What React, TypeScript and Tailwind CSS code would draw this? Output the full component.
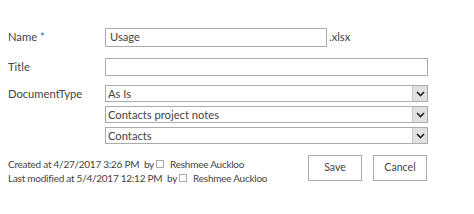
import React from "react";

const font = "font-['Lato','Open_Sans',sans-serif]";

const Chevron: React.FC = () => (
  <span className="flex items-center justify-center w-[15px] h-[15px] bg-[#e1e1e1] border-l border-[#c6c6c6]">
    <svg width="9" height="6" viewBox="0 0 9 6">
      <path d="M1 1 L4.5 4.5 L8 1" fill="none" stroke="#222" strokeWidth="1.6" />
    </svg>
  </span>
);

const Select: React.FC<{ value: string }> = ({ value }) => (
  <div className="flex items-center justify-between w-[323px] h-[17px] border border-[#ababab] bg-white">
    <span className="pl-[2px] leading-none">{value}</span>
    <Chevron />
  </div>
);

const Box: React.FC = () => (
  <span className="inline-block shrink-0 w-[8px] h-[8px] border border-[#aaa] ml-[2px] mr-[6px]" />
);

const App: React.FC = () => {
  return (
    <div className={`w-[474px] h-[214px] bg-white pl-2 pt-[28px] text-[11.2px] text-[#444] ${font}`}>
      {/* Name */}
      <div className="flex items-center h-[19px]">
        <span className="w-[97px] shrink-0">
          Name <span className="text-[#0072c6]">*</span>
        </span>
        <div className="flex items-center w-[222px] h-[19px] border border-[#ababab] pl-[4px]">Usage</div>
        <span className="ml-[2px]">.xlsx</span>
      </div>

      {/* Title */}
      <div className="flex items-center h-[18px] mt-[11px]">
        <span className="w-[97px] shrink-0">Title</span>
        <div className="w-[323px] h-[18px] border border-[#ababab]" />
      </div>

      {/* DocumentType */}
      <div className="flex mt-[9px]">
        <span className="w-[97px] shrink-0 leading-[17px]">DocumentType</span>
        <div className="flex flex-col gap-[4px]">
          <Select value="As Is" />
          <Select value="Contacts project notes" />
          <Select value="Contacts" />
        </div>
      </div>

      {/* Footer */}
      <div className="flex items-start mt-[11px]">
        <div className="w-[300px] shrink-0 whitespace-nowrap text-[10px] tracking-[-0.25px] leading-[14px] pt-[2px]">
          <div className="flex items-center">
            Created at 4/27/2017 3:26 PM&nbsp; by
            <Box />
            Reshmee Auckloo
          </div>
          <div className="flex items-center">
            Last modified at 5/4/2017 12:12 PM&nbsp; by
            <Box />
            Reshmee Auckloo
          </div>
        </div>
        <div className="flex gap-[11px] text-[10.6px]">
          <button className="w-[54px] h-[26px] border border-[#ababab] bg-white">Save</button>
          <button className="w-[54px] h-[26px] border border-[#ababab] bg-white">Cancel</button>
        </div>
      </div>
    </div>
  );
};

export default App;
